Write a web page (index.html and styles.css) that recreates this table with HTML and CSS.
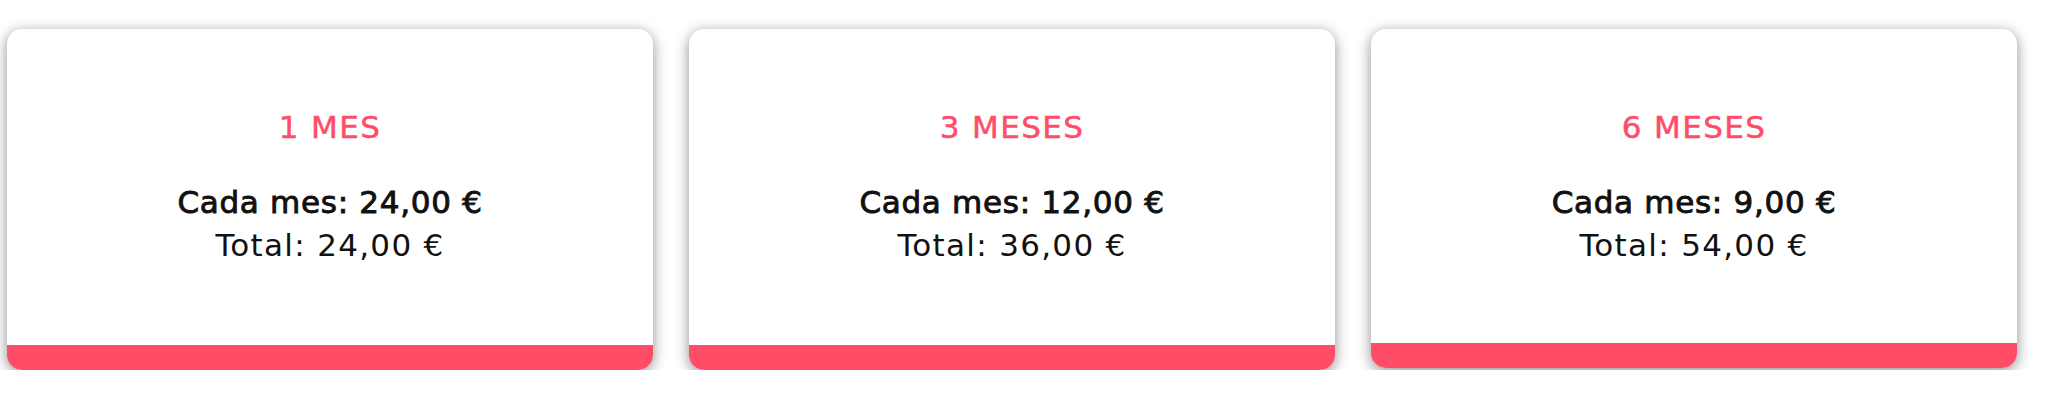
FILE: index.html
```html
<!DOCTYPE html>
<html lang="es">
<head>
    <meta charset="UTF-8">
    <meta name="viewport" content="width=device-width, initial-scale=1.0">
    <title>Planes</title>
    <link rel="stylesheet" href="styles.css">
</head>
<body>
    <div class="plans">
        <!-- 1 mes -->
        <div class="plan">
            <div class="plan-body">
                <h2 class="plan-title">1 MES</h2>
                <p class="plan-monthly">Cada mes: 24,00 €</p>
                <p class="plan-total">Total: 24,00 €</p>
            </div>
            <div class="plan-bar"></div>
        </div>

        <!-- 3 meses -->
        <div class="plan">
            <div class="plan-body">
                <h2 class="plan-title">3 MESES</h2>
                <p class="plan-monthly">Cada mes: 12,00 €</p>
                <p class="plan-total">Total: 36,00 €</p>
            </div>
            <div class="plan-bar"></div>
        </div>

        <!-- 6 meses -->
        <div class="plan plan-short">
            <div class="plan-body">
                <h2 class="plan-title">6 MESES</h2>
                <p class="plan-monthly">Cada mes: 9,00 €</p>
                <p class="plan-total">Total: 54,00 €</p>
            </div>
            <div class="plan-bar"></div>
        </div>
    </div>
</body>
</html>
```

FILE: styles.css
```css
/* Global Styles */
body {
    margin: 0;
    background-color: #FFFFFF;
    font-family: 'DejaVu Sans', 'Noto Sans', sans-serif;
    color: #111111;
}

.plans {
    display: grid;
    grid-template-columns: repeat(3, 646px);
    gap: 36px;
    align-items: start;
    padding: 29px 0 0 7px;
}

.plan {
    display: flex;
    flex-direction: column;
    height: 341px;
    background: #FFFFFF;
    border-radius: 15px;
    overflow: hidden;
    box-shadow: 0 3px 14px rgba(0, 0, 0, 0.45);
}

.plan-short {
    height: 339px;
}

.plan-body {
    flex: 1;
    text-align: center;
    padding-top: 80px;
}

.plan-title {
    margin: 0 0 36px;
    font-size: 31px;
    line-height: 36px;
    font-weight: normal;
    letter-spacing: 1.4px;
    color: #FF4D69;
    -webkit-text-stroke: 0.5px currentColor;
}

.plan-monthly,
.plan-total {
    margin: 0;
    font-size: 31px;
    line-height: 44px;
}

/* fake semi-bold, like the reference */
.plan-monthly {
    line-height: 42px;
    letter-spacing: 0.7px;
    -webkit-text-stroke: 0.9px currentColor;
}

.plan-total {
    letter-spacing: 1.3px;
}

.plan-bar {
    height: 25px;
    background-color: #FF4D67; /* Coral pink */
}
```
